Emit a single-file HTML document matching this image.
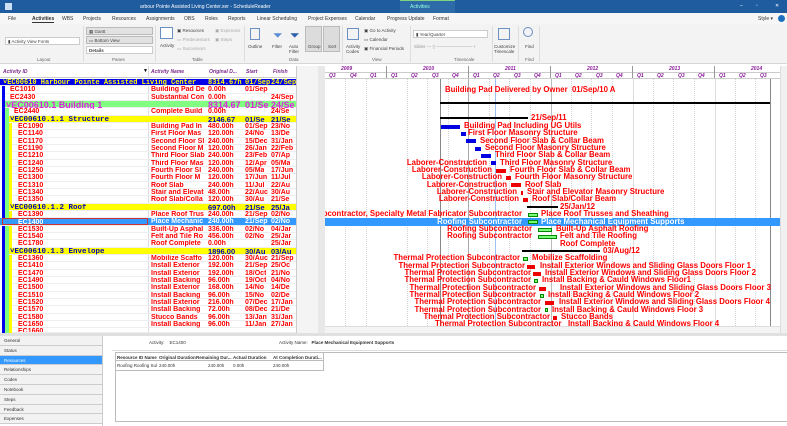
<!DOCTYPE html>
<html><head><meta charset="utf-8"><style>
*{margin:0;padding:0;box-sizing:border-box}
body{width:787px;height:426px;overflow:hidden;background:#fff;font-family:"Liberation Sans",sans-serif;position:relative}
.a{position:absolute}
.tb{left:0;top:0;width:787px;height:13px;background:#1f5b9f;color:#fff;font-size:5px}
.tabs{top:13px;left:0;width:787px;height:11px;background:#f6f6f6;font-size:5px;color:#333}
.tabs span{position:absolute;top:3px}
.rib{top:24px;left:0;width:787px;height:40px;background:#f3f3f3;border-bottom:1px solid #d6d6d6;font-size:4.5px;color:#444}
.grp{position:absolute;top:33px;font-size:4.5px;color:#666}
.sep{position:absolute;top:2px;width:1px;height:36px;background:#ddd}
.hdr{top:66px;height:12px;background:#fff;border-bottom:1px solid #ccc;font-size:5px;font-style:italic;font-weight:bold;color:#7a2a8a}
.r{position:absolute;left:0;width:296px;height:7.33px;font-size:7px;font-weight:bold;color:#f00;line-height:7.3px;white-space:nowrap;border-bottom:1px solid #eee}
.r span{position:absolute;top:0;overflow:hidden}
.c1{left:0}.c2{left:151px;width:56px}.c3{left:208px;width:36px}.c4{left:245px;width:25px}.c5{left:271px;width:25px}
.g{position:absolute;font-size:7.8px;font-weight:bold;color:#f00;white-space:nowrap;line-height:7px}
.gr{position:absolute;font-size:7.8px;font-weight:bold;color:#f00;white-space:nowrap;line-height:7px;text-align:right}
.bar{position:absolute;height:4px}
.sb{position:absolute;height:2px;background:#000}
.nav div{height:9.8px;border-bottom:1px solid #ccc;font-size:4.5px;padding:2px 4px;color:#333;background:#f2f2f2}
.dl{position:absolute;top:79px;width:0;height:247px;border-left:1px dotted #d4d4d4}
</style></head><body>
<div class="a tb"><span class="a" style="left:5px;top:3px;width:7px;height:7px;background:#cfe0f4"></span><span class="a" style="left:140px;top:4px">arbour Pointe Assisted Living Center.xer - ScheduleReader</span><span class="a" style="left:400px;top:0;width:55px;height:13px;background:#2c6aa8;border-top:1px solid #7fd27f"></span><span class="a" style="left:410px;top:4px;color:#9fd">Activities</span><span class="a" style="left:740px;top:3px">–</span><span class="a" style="left:756px;top:3px">▫</span><span class="a" style="left:775px;top:3px">✕</span></div>
<div class="a tabs"><span style="left:8px">File</span><span style="left:32px;font-weight:bold;border-bottom:1px solid #333">Activities</span><span style="left:62px">WBS</span><span style="left:83px">Projects</span><span style="left:112px">Resources</span><span style="left:146px">Assignments</span><span style="left:184px">OBS</span><span style="left:205px">Roles</span><span style="left:228px">Reports</span><span style="left:257px">Linear Scheduling</span><span style="left:308px">Project Expenses</span><span style="left:355px">Calendar</span><span style="left:387px">Progress Update</span><span style="left:433px">Format</span><span style="left:758px">Style ▾</span><span style="left:778px;top:2px;width:7px;height:7px;border-radius:50%;background:#1f6fbf"></span></div>
<div class="a rib">
<div class="a" style="left:5px;top:13px;width:75px;height:8px;background:#fff;border:1px solid #ccc;padding:1px 2px">▮ Activity View Fonts</div>
<div class="grp" style="left:37px">Layout</div><div class="sep" style="left:83px"></div>
<div class="a" style="left:86px;top:3px;width:67px;height:8px;background:#e2e2e2;border:1px solid #bbb;padding:1px 2px">▦ Gantt</div>
<div class="a" style="left:86px;top:12px;width:67px;height:8px;background:#e2e2e2;border:1px solid #bbb;padding:1px 2px">▭ Bottom View</div>
<div class="a" style="left:86px;top:22px;width:67px;height:8px;background:#fff;border:1px solid #ccc;padding:1px 2px;font-weight:bold">Details</div>
<div class="grp" style="left:112px">Panes</div><div class="sep" style="left:155px"></div>
<div class="a" style="left:160px;top:3px;width:13px;height:12px;border:1px solid #6a8fc0;background:#fff"></div><div class="a" style="left:160px;top:19px">Activity</div>
<div class="a" style="left:177px;top:4px">▣ Resources</div><div class="a" style="left:177px;top:13px;color:#aaa">▭ Predecessors</div><div class="a" style="left:177px;top:22px;color:#aaa">▭ Successors</div>
<div class="a" style="left:215px;top:4px;color:#aaa">▣ Expenses</div><div class="a" style="left:215px;top:13px;color:#aaa">▣ Steps</div>
<div class="grp" style="left:192px">Table</div><div class="sep" style="left:244px"></div>
<div class="a" style="left:250px;top:4px;width:10px;height:12px;border:1px solid #6a8fc0"></div><div class="a" style="left:248px;top:20px">Outline</div>
<div class="a" style="left:273px;top:4px;color:#5a8ed0;font-size:12px">⏷</div><div class="a" style="left:272px;top:20px">Filter</div>
<div class="a" style="left:290px;top:4px;color:#2a5fae;font-size:12px">⏷</div><div class="a" style="left:289px;top:20px">Auto<br>Filter</div>
<div class="grp" style="left:289px">Data</div>
<div class="a" style="left:305px;top:2px;width:17px;height:26px;background:#dcdcdc;border:1px solid #bbb"></div><div class="a" style="left:308px;top:20px">Group</div>
<div class="a" style="left:323px;top:2px;width:17px;height:26px;background:#dcdcdc;border:1px solid #bbb"></div><div class="a" style="left:328px;top:20px">Sort</div>
<div class="sep" style="left:342px"></div>
<div class="a" style="left:347px;top:4px;width:12px;height:12px;border:1px solid #6a8fc0"></div><div class="a" style="left:346px;top:20px">Activity<br>Codes</div>
<div class="a" style="left:364px;top:4px">▣ Go to Activity</div><div class="a" style="left:364px;top:13px">▭ Calendar</div><div class="a" style="left:364px;top:22px">▣ Financial Periods</div>
<div class="grp" style="left:372px">View</div><div class="sep" style="left:410px"></div>
<div class="a" style="left:413px;top:6px;width:75px;height:8px;background:#fff;border:1px solid #ccc;padding:1px 2px">▮ Year/Quarter</div>
<div class="a" style="left:414px;top:20px;color:#999">Slider — ▯ ———————— +</div>
<div class="grp" style="left:454px">Timescale</div><div class="sep" style="left:492px"></div>
<div class="a" style="left:498px;top:4px;width:12px;height:12px;border:1px solid #6a8fc0"></div><div class="a" style="left:494px;top:20px">Customize<br>Timescale</div>
<div class="sep" style="left:518px"></div>
<div class="a" style="left:523px;top:3px;width:10px;height:10px;border:1px solid #6a8fc0;border-radius:50%"></div><div class="a" style="left:525px;top:20px">Find</div><div class="grp" style="left:525px">Find</div><div class="sep" style="left:539px"></div>
</div>
<div class="a hdr" style="left:0;width:296px"><span class="a" style="left:3px;top:3px">Activity ID</span><span class="a" style="left:143px;top:2px;color:#000;font-style:normal">▼</span><span class="a" style="left:151px;top:3px">Activity Name</span><span class="a" style="left:209px;top:3px">Original D...</span><span class="a" style="left:246px;top:3px">Start</span><span class="a" style="left:273px;top:3px">Finish</span></div>
<div class="a" style="left:148px;top:66px;width:1px;height:267px;background:#ddd"></div>
<div class="a" style="left:296px;top:66px;width:29px;height:267px;background:#f4f4f4;border-left:1px solid #ccc"></div>
<div class="a" style="left:318px;top:66px;width:7px;height:267px;background:#e8e8e8"></div>
<div class="a" style="left:2px;top:79px;width:3px;height:254px;background:#0000f0"></div>
<div class="a" style="left:5px;top:101px;width:4px;height:232px;background:#80ff80"></div>
<div class="a" style="left:9px;top:116px;width:3px;height:217px;background:#ffff00"></div>
<div class="r" style="top:79px;background:#0000e8;color:#ff0;font-family:'Liberation Mono',monospace;font-size:7px;line-height:8px"><span class="c1" style="left:3px">˅EC00610 Harbour Pointe Assisted Living Center</span><span class="c3">8314.67h</span><span class="c4">01/Sep</span><span class="c5">24/Sep</span></div>
<div class="r" style="top:86.3px;left:5px;width:291px"><span style="left:5px">EC1010</span><span style="left:146px">Building Pad De</span><span style="left:203px">0.00h</span><span style="left:240px">01/Sep</span></div>
<div class="r" style="top:93.7px;left:5px;width:291px"><span style="left:5px">EC2430</span><span style="left:146px;width:56px">Substantial Con</span><span style="left:203px">0.00h</span><span style="left:266px">24/Sep</span></div>
<div class="r" style="top:101px;left:5px;width:291px;background:#80ff80;color:#e020e0;font-size:9px;line-height:8px"><span style="left:1px">˅EC00610.1 Building 1</span><span style="left:203px">8314.67</span><span style="left:240px">01/Se</span><span style="left:266px">24/Se</span></div>
<div class="r" style="top:108.3px;left:9px;width:287px"><span style="left:5px">EC2440</span><span style="left:142px">Complete Build</span><span style="left:199px">0.00h</span><span style="left:262px">24/Se</span></div>
<div class="r" style="top:115.7px;left:9px;width:287px;background:#ffff00;color:#0000c0;font-family:'Liberation Mono',monospace;font-size:7.5px;line-height:8px"><span style="left:1px">˅EC00610.1.1 Structure</span><span style="left:199px;font-family:'Liberation Sans'">2146.67</span><span style="left:236px;font-family:'Liberation Sans'">01/Se</span><span style="left:262px;font-family:'Liberation Sans'">21/Se</span></div>
<div class="r" style="top:123px;left:12px;width:284px"><span style="left:6px">EC1090</span><span style="left:139px;width:56px">Building Pad In</span><span style="left:196px">480.00h</span><span style="left:233px">01/Sep</span><span style="left:259px">23/No</span></div>
<div class="r" style="top:130.3px;left:12px;width:284px"><span style="left:6px">EC1140</span><span style="left:139px;width:56px">First Floor Mas</span><span style="left:196px">120.00h</span><span style="left:233px">24/No</span><span style="left:259px">13/De</span></div>
<div class="r" style="top:137.7px;left:12px;width:284px"><span style="left:6px">EC1170</span><span style="left:139px;width:56px">Second Floor Sl</span><span style="left:196px">240.00h</span><span style="left:233px">15/Dec</span><span style="left:259px">31/Jan</span></div>
<div class="r" style="top:145px;left:12px;width:284px"><span style="left:6px">EC1190</span><span style="left:139px;width:56px">Second Floor M</span><span style="left:196px">120.00h</span><span style="left:233px">26/Jan</span><span style="left:259px">22/Feb</span></div>
<div class="r" style="top:152.3px;left:12px;width:284px"><span style="left:6px">EC1210</span><span style="left:139px;width:56px">Third Floor Slab</span><span style="left:196px">240.00h</span><span style="left:233px">23/Feb</span><span style="left:259px">07/Ap</span></div>
<div class="r" style="top:159.7px;left:12px;width:284px"><span style="left:6px">EC1240</span><span style="left:139px;width:56px">Third Floor Mas</span><span style="left:196px">120.00h</span><span style="left:233px">12/Apr</span><span style="left:259px">05/Ma</span></div>
<div class="r" style="top:167px;left:12px;width:284px"><span style="left:6px">EC1250</span><span style="left:139px;width:56px">Fourth Floor Sl</span><span style="left:196px">240.00h</span><span style="left:233px">05/Ma</span><span style="left:259px">17/Jun</span></div>
<div class="r" style="top:174.3px;left:12px;width:284px"><span style="left:6px">EC1300</span><span style="left:139px;width:56px">Fourth Floor M</span><span style="left:196px">120.00h</span><span style="left:233px">17/Jun</span><span style="left:259px">11/Jul</span></div>
<div class="r" style="top:181.7px;left:12px;width:284px"><span style="left:6px">EC1310</span><span style="left:139px;width:56px">Roof Slab</span><span style="left:196px">240.00h</span><span style="left:233px">11/Jul</span><span style="left:259px">22/Au</span></div>
<div class="r" style="top:189px;left:12px;width:284px"><span style="left:6px">EC1340</span><span style="left:139px;width:56px">Stair and Elevat</span><span style="left:196px">48.00h</span><span style="left:233px">22/Auc</span><span style="left:259px">30/Au</span></div>
<div class="r" style="top:196.3px;left:12px;width:284px"><span style="left:6px">EC1350</span><span style="left:139px;width:56px">Roof Slab/Colla</span><span style="left:196px">120.00h</span><span style="left:233px">30/Au</span><span style="left:259px">21/Se</span></div>
<div class="r" style="top:203.7px;left:9px;width:287px;background:#ffff00;color:#0000c0;font-family:'Liberation Mono',monospace;font-size:7.5px;line-height:8px"><span style="left:1px">˅EC00610.1.2 Roof</span><span style="left:199px;font-family:'Liberation Sans'">697.00h</span><span style="left:236px;font-family:'Liberation Sans'">21/Se</span><span style="left:262px;font-family:'Liberation Sans'">25/Ja</span></div>
<div class="r" style="top:211px;left:12px;width:284px"><span style="left:6px">EC1390</span><span style="left:139px;width:56px">Place Roof Trus</span><span style="left:196px">240.00h</span><span style="left:233px">21/Sep</span><span style="left:259px">02/No</span></div>
<div class="r" style="top:218.3px;left:0;width:296px;background:#3399ff;color:#fff"><span style="left:2px;width:146px;height:7px;border:1px solid #c33;padding-left:15px">EC1400</span><span style="left:151px;width:56px">Place Mechanic</span><span style="left:208px">240.00h</span><span style="left:245px">21/Sep</span><span style="left:271px">02/No</span></div>
<div class="r" style="top:225.7px;left:12px;width:284px"><span style="left:6px">EC1530</span><span style="left:139px;width:56px">Built-Up Asphal</span><span style="left:196px">336.00h</span><span style="left:233px">02/No</span><span style="left:259px">04/Jar</span></div>
<div class="r" style="top:233px;left:12px;width:284px"><span style="left:6px">EC1540</span><span style="left:139px;width:56px">Felt and Tile Ro</span><span style="left:196px">456.00h</span><span style="left:233px">02/No</span><span style="left:259px">25/Jar</span></div>
<div class="r" style="top:240.3px;left:12px;width:284px"><span style="left:6px">EC1780</span><span style="left:139px;width:56px">Roof Complete</span><span style="left:196px">0.00h</span><span style="left:259px">25/Jar</span></div>
<div class="r" style="top:247.7px;left:9px;width:287px;background:#ffff00;color:#0000c0;font-family:'Liberation Mono',monospace;font-size:7.5px;line-height:8px"><span style="left:1px">˅EC00610.1.3 Envelope</span><span style="left:199px;font-family:'Liberation Sans'">1896.00</span><span style="left:236px;font-family:'Liberation Sans'">30/Au</span><span style="left:262px;font-family:'Liberation Sans'">03/Au</span></div>
<div class="r" style="top:255px;left:12px;width:284px"><span style="left:6px">EC1360</span><span style="left:139px;width:56px">Mobilize Scaffo</span><span style="left:196px">120.00h</span><span style="left:233px">30/Auc</span><span style="left:259px">21/Sep</span></div>
<div class="r" style="top:262.3px;left:12px;width:284px"><span style="left:6px">EC1410</span><span style="left:139px;width:56px">Install Exterior</span><span style="left:196px">192.00h</span><span style="left:233px">21/Sep</span><span style="left:259px">25/Oc</span></div>
<div class="r" style="top:269.7px;left:12px;width:284px"><span style="left:6px">EC1470</span><span style="left:139px;width:56px">Install Exterior</span><span style="left:196px">192.00h</span><span style="left:233px">18/Oct</span><span style="left:259px">21/No</span></div>
<div class="r" style="top:277px;left:12px;width:284px"><span style="left:6px">EC1490</span><span style="left:139px;width:56px">Install Backing</span><span style="left:196px">96.00h</span><span style="left:233px">19/Oct</span><span style="left:259px">04/No</span></div>
<div class="r" style="top:284.3px;left:12px;width:284px"><span style="left:6px">EC1500</span><span style="left:139px;width:56px">Install Exterior</span><span style="left:196px">168.00h</span><span style="left:233px">14/No</span><span style="left:259px">14/De</span></div>
<div class="r" style="top:291.7px;left:12px;width:284px"><span style="left:6px">EC1510</span><span style="left:139px;width:56px">Install Backing</span><span style="left:196px">96.00h</span><span style="left:233px">15/No</span><span style="left:259px">02/De</span></div>
<div class="r" style="top:299px;left:12px;width:284px"><span style="left:6px">EC1520</span><span style="left:139px;width:56px">Install Exterior</span><span style="left:196px">216.00h</span><span style="left:233px">07/Dec</span><span style="left:259px">17/Jan</span></div>
<div class="r" style="top:306.3px;left:12px;width:284px"><span style="left:6px">EC1570</span><span style="left:139px;width:56px">Install Backing</span><span style="left:196px">72.00h</span><span style="left:233px">08/Dec</span><span style="left:259px">21/De</span></div>
<div class="r" style="top:313.7px;left:12px;width:284px"><span style="left:6px">EC1580</span><span style="left:139px;width:56px">Stucco Bands</span><span style="left:196px">96.00h</span><span style="left:233px">13/Jan</span><span style="left:259px">31/Jan</span></div>
<div class="r" style="top:321px;left:12px;width:284px"><span style="left:6px">EC1650</span><span style="left:139px;width:56px">Install Backing</span><span style="left:196px">96.00h</span><span style="left:233px">11/Jan</span><span style="left:259px">27/Jan</span></div>
<div class="r" style="top:328.3px;left:12px;width:284px;height:4.7px;overflow:hidden"><span style="left:6px">EC1660</span></div>
<div class="a" style="left:325px;top:66px;width:455px;height:13px;border-bottom:1px solid #ccc;font-size:5px;font-style:italic;font-weight:bold;color:#8a1a9a;overflow:hidden">
<div class="a" style="left:0;top:6px;width:455px;height:1px;background:#ccc"></div>
<span class="a" style="left:16px;top:0">2009</span><span class="a" style="left:98px;top:0">2010</span><span class="a" style="left:180px;top:0">2011</span><span class="a" style="left:262px;top:0">2012</span><span class="a" style="left:344px;top:0">2013</span><span class="a" style="left:426px;top:0">2014</span>
<div class="a" style="left:61px;top:0;width:1px;height:13px;background:#999"></div><div class="a" style="left:143px;top:0;width:1px;height:13px;background:#999"></div><div class="a" style="left:225px;top:0;width:1px;height:13px;background:#999"></div><div class="a" style="left:307px;top:0;width:1px;height:13px;background:#999"></div><div class="a" style="left:389px;top:0;width:1px;height:13px;background:#999"></div>
<span class="a" style="left:4px;top:7px">Q3</span><span class="a" style="left:25px;top:7px">Q4</span><span class="a" style="left:45px;top:7px">Q1</span>
<span class="a" style="left:66px;top:7px">Q1</span><span class="a" style="left:86px;top:7px">Q2</span><span class="a" style="left:107px;top:7px">Q3</span><span class="a" style="left:127px;top:7px">Q4</span>
<span class="a" style="left:148px;top:7px">Q1</span><span class="a" style="left:168px;top:7px">Q2</span><span class="a" style="left:189px;top:7px">Q3</span><span class="a" style="left:209px;top:7px">Q4</span>
<span class="a" style="left:230px;top:7px">Q1</span><span class="a" style="left:250px;top:7px">Q2</span><span class="a" style="left:271px;top:7px">Q3</span><span class="a" style="left:291px;top:7px">Q4</span>
<span class="a" style="left:312px;top:7px">Q1</span><span class="a" style="left:332px;top:7px">Q2</span><span class="a" style="left:353px;top:7px">Q3</span><span class="a" style="left:373px;top:7px">Q4</span>
<span class="a" style="left:394px;top:7px">Q1</span><span class="a" style="left:414px;top:7px">Q2</span><span class="a" style="left:435px;top:7px">Q3</span>
</div>
<div class="a" style="left:780px;top:66px;width:7px;height:267px;background:#f0f0f0;border-left:1px solid #ddd"></div>
<div class="dl" style="left:345px"></div><div class="dl" style="left:366px"></div><div class="dl" style="left:407px"></div><div class="dl" style="left:427px"></div><div class="dl" style="left:448px"></div><div class="dl" style="left:489px"></div><div class="dl" style="left:509px"></div><div class="dl" style="left:530px"></div><div class="dl" style="left:571px"></div><div class="dl" style="left:591px"></div><div class="dl" style="left:612px"></div><div class="dl" style="left:653px"></div><div class="dl" style="left:673px"></div><div class="dl" style="left:694px"></div><div class="dl" style="left:735px"></div><div class="dl" style="left:755px"></div>
<div class="a" style="left:440px;top:79px;width:1px;height:247px;background:#888"></div>
<div class="a" style="left:468px;top:79px;width:1px;height:247px;background:#aaa"></div>
<div class="a" style="left:495px;top:79px;width:1px;height:247px;background:#9bc0ef"></div>
<div class="a" style="left:551px;top:79px;width:1px;height:247px;background:#bbb"></div>
<div class="a" style="left:633px;top:79px;width:1px;height:247px;background:#ddd"></div>
<div class="a" style="left:715px;top:79px;width:1px;height:247px;background:#ddd"></div>
<div class="a" style="left:770px;top:79px;width:1px;height:247px;background:#888"></div>
<div class="a" style="left:325px;top:218.3px;width:455px;height:7.3px;background:#3399ff"></div>
<div class="sb" style="left:440px;top:102px;width:330px"></div>
<div class="sb" style="left:440px;top:117px;width:88px"></div>
<div class="sb" style="left:527px;top:206px;width:31px"></div>
<div class="sb" style="left:522px;top:250px;width:78px"></div>
<div class="bar" style="left:441px;top:125px;width:19px;background:#0000e0"></div>
<div class="bar" style="left:461px;top:132px;width:5px;background:#0000e0"></div>
<div class="bar" style="left:466px;top:139px;width:10px;background:#0000e0"></div>
<div class="bar" style="left:475px;top:147px;width:6px;background:#0000e0"></div>
<div class="bar" style="left:481px;top:154px;width:10px;background:#0000e0"></div>
<div class="bar" style="left:491px;top:161px;width:5px;background:#0000e0"></div>
<div class="bar" style="left:496px;top:169px;width:10px;background:#e00"></div>
<div class="bar" style="left:506px;top:176px;width:5px;background:#e00"></div>
<div class="bar" style="left:511px;top:183px;width:10px;background:#e00"></div>
<div class="bar" style="left:521px;top:191px;width:2px;background:#e00"></div>
<div class="bar" style="left:523px;top:198px;width:5px;background:#e00"></div>
<div class="bar" style="left:528px;top:213px;width:10px;background:#7f7;border:1px solid #080"></div>
<div class="bar" style="left:528px;top:220px;width:10px;background:#7f7;border:1px solid #080"></div>
<div class="bar" style="left:538px;top:228px;width:14px;background:#7f7;border:1px solid #080"></div>
<div class="bar" style="left:538px;top:235px;width:19px;background:#7f7;border:1px solid #080"></div>
<div class="bar" style="left:523px;top:257px;width:5px;background:#7f7;border:1px solid #080"></div>
<div class="bar" style="left:527px;top:265px;width:8px;background:#e00"></div>
<div class="bar" style="left:533px;top:272px;width:8px;background:#e00"></div>
<div class="bar" style="left:534px;top:279px;width:4px;background:#7f7;border:1px solid #080"></div>
<div class="bar" style="left:539px;top:287px;width:7px;background:#e00"></div>
<div class="bar" style="left:540px;top:294px;width:4px;background:#7f7;border:1px solid #080"></div>
<div class="bar" style="left:545px;top:301px;width:9px;background:#e00"></div>
<div class="bar" style="left:545px;top:308px;width:3px;background:#7f7;border:1px solid #080"></div>
<div class="bar" style="left:553px;top:316px;width:4px;background:#e00"></div>
<div class="g" style="left:445px;top:86px">Building Pad Delivered by Owner&nbsp; 01/Sep/10 A</div>
<div class="g" style="left:531px;top:114px">21/Sep/11</div>
<div class="g" style="left:464px;top:122px">Building Pad Including UG Utils</div>
<div class="g" style="left:468px;top:129px">First Floor Masonry Structure</div>
<div class="g" style="left:480px;top:137px">Second Floor Slab &amp; Collar Beam</div>
<div class="g" style="left:485px;top:144px">Second Floor Masonry Structure</div>
<div class="g" style="left:495px;top:151px">Third Floor Slab &amp; Collar Beam</div>
<div class="gr" style="right:300px;top:159px">Laborer-Construction</div><div class="g" style="left:500px;top:159px">Third Floor Masonry Structure</div>
<div class="gr" style="right:295px;top:166px">Laborer-Construction</div><div class="g" style="left:510px;top:166px">Fourth Floor Slab &amp; Collar Beam</div>
<div class="gr" style="right:285px;top:173px">Laborer-Construction</div><div class="g" style="left:515px;top:173px">Fourth Floor Masonry Structure</div>
<div class="gr" style="right:280px;top:181px">Laborer-Construction</div><div class="g" style="left:525px;top:181px">Roof Slab</div>
<div class="gr" style="right:270px;top:188px">Laborer-Construction</div><div class="g" style="left:527px;top:188px">Stair and Elevator Masonry Structure</div>
<div class="gr" style="right:268px;top:195px">Laborer-Construction</div><div class="g" style="left:532px;top:195px">Roof Slab/Collar Beam</div>
<div class="g" style="left:560px;top:203px">25/Jan/12</div>
<div class="gr" style="right:265px;top:210px;width:197px;overflow:hidden;direction:rtl">Subcontractor, Specialty Metal Fabricator Subcontractor</div><div class="g" style="left:541px;top:210px">Place Roof Trusses and Sheathing</div>
<div class="gr" style="right:265px;top:218px;color:#fff">Roofing Subcontractor</div><div class="g" style="left:541px;top:218px;color:#fff">Place Mechanical Equipment Supports</div>
<div class="gr" style="right:255px;top:225px">Roofing Subcontractor</div><div class="g" style="left:556px;top:225px">Built-Up Asphalt Roofing</div>
<div class="gr" style="right:255px;top:232px">Roofing Subcontractor</div><div class="g" style="left:560px;top:232px">Felt and Tile Roofing</div>
<div class="g" style="left:560px;top:240px">Roof Complete</div>
<div class="g" style="left:603px;top:247px">03/Aug/12</div>
<div class="gr" style="right:267px;top:254px">Thermal Protection Subcontractor</div><div class="g" style="left:532px;top:254px">Mobilize Scaffolding</div>
<div class="gr" style="right:262px;top:262px">Thermal Protection Subcontractor</div><div class="g" style="left:540px;top:262px">Install Exterior Windows and Sliding Glass Doors Floor 1</div>
<div class="gr" style="right:256px;top:269px">Thermal Protection Subcontractor</div><div class="g" style="left:545px;top:269px">Install Exterior Windows and Sliding Glass Doors Floor 2</div>
<div class="gr" style="right:256px;top:276px">Thermal Protection Subcontractor</div><div class="g" style="left:542px;top:276px">Install Backing &amp; Cauld Windows Floor1</div>
<div class="gr" style="right:251px;top:284px">Thermal Protection Subcontractor</div><div class="g" style="left:560px;top:284px">Install Exterior Windows and Sliding Glass Doors Floor 3</div>
<div class="gr" style="right:251px;top:291px">Thermal Protection Subcontractor</div><div class="g" style="left:548px;top:291px">Install Backing &amp; Cauld Windows Floor 2</div>
<div class="gr" style="right:246px;top:298px">Thermal Protection Subcontractor</div><div class="g" style="left:559px;top:298px">Install Exterior Windows and Sliding Glass Doors Floor 4</div>
<div class="gr" style="right:246px;top:306px">Thermal Protection Subcontractor</div><div class="g" style="left:552px;top:306px">Install Backing &amp; Cauld Windows Floor 3</div>
<div class="gr" style="right:237px;top:313px">Thermal Protection Subcontractor</div><div class="g" style="left:561px;top:313px">Stucco Bands</div>
<div class="a" style="left:325px;top:320px;width:455px;height:6px;overflow:hidden"><div class="g" style="left:110px;top:0">Thermal Protection Subcontractor&nbsp;&nbsp; Install Backing &amp; Cauld Windows Floor 4</div></div>
<div class="a" style="left:325px;top:326px;width:455px;height:7px;background:#f4f4f4;border-top:1px solid #ddd"></div>
<div class="a" style="left:0;top:333px;width:787px;height:3px;background:#e0e0e0"></div>
<div class="a nav" style="left:0;top:336px;width:103px;height:90px;border-right:1px solid #ccc">
<div>General</div><div>Status</div><div style="background:#3399ff;color:#fff">Resources</div><div>Relationships</div><div>Codes</div><div>Notebook</div><div>Steps</div><div>Feedback</div><div>Expenses</div></div>
<div class="a" style="left:104px;top:336px;width:683px;height:90px;background:#fff;font-size:4.5px;color:#333">
<span class="a" style="left:45px;top:4px">Activity:&nbsp;&nbsp;&nbsp; EC1400</span>
<span class="a" style="left:175px;top:4px">Activity Name:&nbsp;&nbsp; <b>Place Mechanical Equipment Supports</b></span>
<div class="a" style="left:8px;top:14px;width:675px;height:1px;background:#ddd"></div>
<div class="a" style="left:11px;top:16px;width:680px;height:70px;border:1px solid #bbb"></div>
<div class="a" style="left:12px;top:17px;width:208px;height:18px;border-right:1px solid #bbb;border-bottom:1px solid #bbb">
<div class="a" style="left:0;top:0;width:208px;height:8px;border-bottom:1px solid #bbb;font-weight:bold"><span class="a" style="left:1px;top:2px">Resource ID Name</span><span class="a" style="left:43px;top:2px">Original Duration</span><span class="a" style="left:80px;top:2px">Remaining Dur...</span><span class="a" style="left:117px;top:2px">Actual Duration</span><span class="a" style="left:157px;top:2px">At Completion Durati...</span></div>
<span class="a" style="left:1px;top:10px">Roofing Roofing Sul</span><span class="a" style="left:43px;top:10px">240.00h</span><span class="a" style="left:92px;top:10px">240.00h</span><span class="a" style="left:117px;top:10px">0.00h</span><span class="a" style="left:157px;top:10px">240.00h</span>
</div></div>
</body></html>
